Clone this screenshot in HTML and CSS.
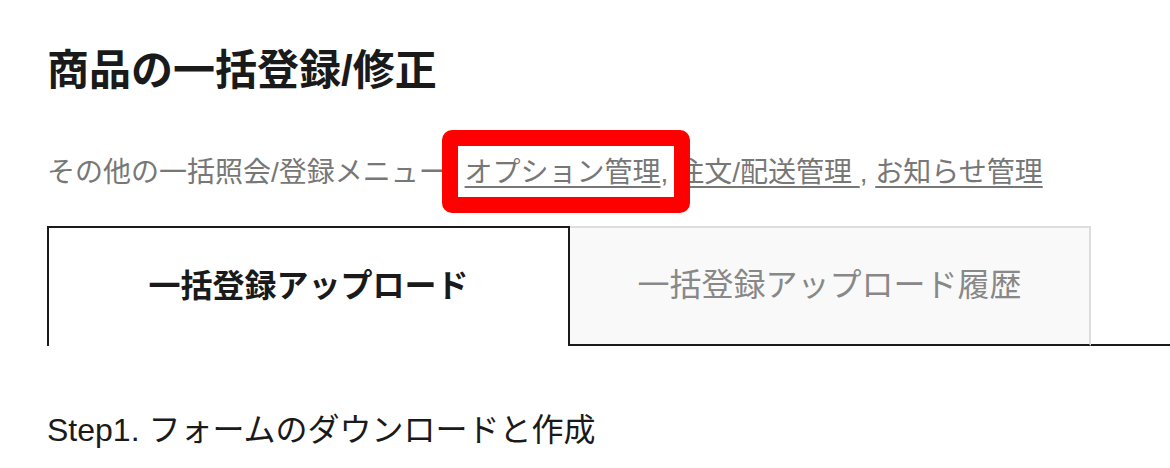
FILE: index.html
```html
<!DOCTYPE html>
<html lang="ja">
<head>
<meta charset="utf-8">
<title>商品の一括登録/修正</title>
<link rel="stylesheet" href="styles.css">
</head>
<body>
<div class="page">
  <h1 class="title">商品の一括登録/修正</h1>
  <p class="menu"><span class="lead">その他の一括照会/登録メニュー</span> <a class="link" href="#">オプション管理</a>, <a class="link" href="#">注文/配送管理 </a>, <a class="link" href="#">お知らせ管理</a></p>
  <div class="tabs">
    <div class="tab tab-active">一括登録アップロード</div>
    <div class="tab tab-inactive">一括登録アップロード履歴</div>
    <div class="tab-fill"></div>
  </div>
  <h2 class="step">Step1. フォームのダウンロードと作成</h2>
</div>
<div class="highlight"></div>
</body>
</html>
```

FILE: styles.css
```css
html, body {
  margin: 0;
  padding: 0;
  background: #ffffff;
}

body {
  font-family: "Liberation Sans", "Noto Sans CJK JP", sans-serif;
  color: #1a1a1a;
  position: relative;
  width: 1170px;
  height: 468px;
  overflow: hidden;
}

.page {
  padding: 0 0 0 47px;
}

.title {
  margin: 0;
  padding-top: 46px;
  font-size: 42px;
  line-height: 50px;
  font-weight: 700;
  color: #1a1a1a;
}

.menu {
  margin: 57px 0 0;
  font-size: 28px;
  line-height: 40px;
  color: #777777;
  white-space: nowrap;
}

.lead {
  margin-right: 10px;
}

.link {
  color: #777777;
  text-decoration: underline;
  text-decoration-thickness: 2px;
  text-underline-offset: 4px;
}

.tabs {
  display: flex;
  margin-top: 33px;
  height: 120px;
}

.tab {
  box-sizing: border-box;
  display: flex;
  align-items: center;
  justify-content: center;
  font-size: 32px;
  height: 120px;
  padding-bottom: 8px;
}

.tab-active {
  width: 523px;
  border: 2px solid #1a1a1a;
  border-bottom: none;
  font-weight: 700;
  color: #1a1a1a;
}

.tab-inactive {
  width: 521px;
  background: #f9f9f9;
  border-top: 2px solid #dddddd;
  border-right: 2px solid #dddddd;
  border-bottom: 2px solid #1a1a1a;
  color: #888888;
}

.tab-fill {
  flex: 1;
  border-bottom: 2px solid #1a1a1a;
}

.step {
  margin: 64px 0 0;
  font-size: 32px;
  line-height: 40px;
  font-weight: 400;
  color: #1a1a1a;
}

.highlight {
  position: absolute;
  left: 442px;
  top: 130px;
  width: 248px;
  height: 83px;
  box-sizing: border-box;
  border: 16px solid #ff0000;
  border-radius: 10px;
}
```
